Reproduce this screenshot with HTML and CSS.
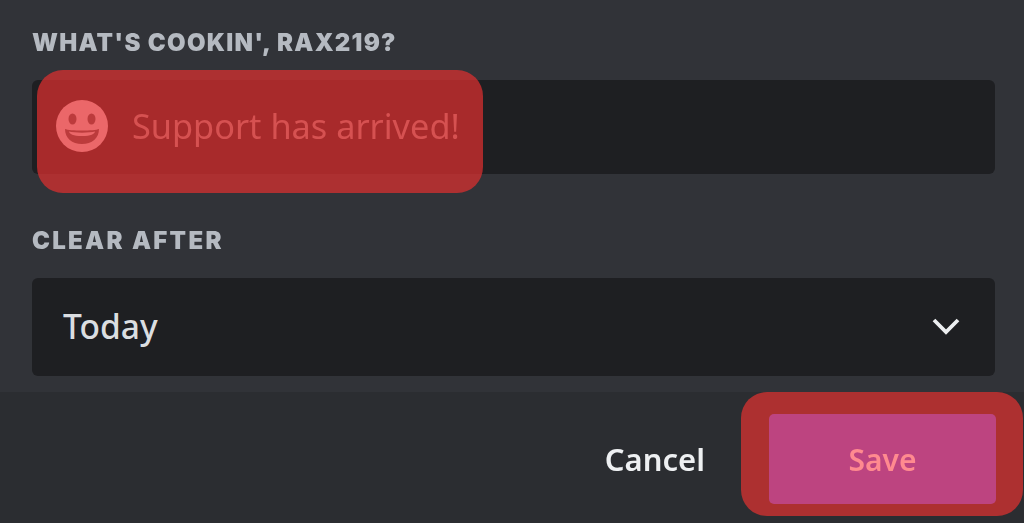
FILE: index.html
```html
<!DOCTYPE html>
<html lang="en">
<head>
<meta charset="utf-8">
<title>Set a custom status</title>
<link rel="stylesheet" href="styles.css">
</head>
<body>
<main class="modal">
  <section class="content">
    <label class="label label-status">WHAT'S COOKIN', RAX219?</label>
    <div class="field field-status">
      <svg class="emoji" viewBox="0 0 52 52" aria-hidden="true">
        <circle cx="26" cy="26" r="26" fill="#ffe9f0"/>
        <ellipse cx="16.500" cy="19" rx="4" ry="5.500" fill="#000" fill-opacity=".62"/>
        <ellipse cx="35.500" cy="19" rx="4" ry="5.500" fill="#000" fill-opacity=".62"/>
        <path d="M9 29C14 31 38 31 43 29C43 38 36 44 26 44C16 44 9 38 9 29Z" fill="#000" fill-opacity=".62"/>
        <path d="M13 31.500C18 33 34 33 39 31.500C38.500 34 35 36 26 36C17 36 13.500 34 13 31.500Z" fill="#ffe9f0"/>
      </svg>
      <span class="status-text">Support has arrived!</span>
      <div class="highlight-status"></div>
    </div>
    <label class="label label-clear">CLEAR AFTER</label>
    <div class="field field-clear">
      <span class="clear-value">Today</span>
      <svg class="chevron" viewBox="0 0 30 20" aria-hidden="true">
        <path d="M3 4L15 16L27 4" fill="none" stroke="#eceef0" stroke-width="3.800"/>
      </svg>
    </div>
  </section>
  <footer class="footer">
    <button class="btn btn-cancel" type="button">Cancel</button>
    <div class="highlight-save">
      <button class="btn btn-save" type="button">Save</button>
    </div>
  </footer>
</main>
</body>
</html>
```
FILE: styles.css
```css
* { box-sizing: border-box; }
html, body { margin: 0; height: 100%; }
body { background: #313338; overflow: hidden; font-family: "Noto Sans", "Liberation Sans", sans-serif; }
.modal { width: 1024px; height: 523px; display: flex; flex-direction: column; filter: blur(.45px); }
.content { height: 392px; padding: 29px 29px 0 32px; display: flex; flex-direction: column; }
.label { display: block; height: 28px; line-height: 28px; font-family: Inter, "Liberation Sans", sans-serif; font-size: 24px; font-weight: 900; color: #b5bac1; white-space: nowrap; }
.label-status { margin-bottom: 23px; letter-spacing: 1.260px; }
.label-clear { margin-bottom: 23px; margin-top: 53px; letter-spacing: 2.300px; }
.field { position: relative; background: #1e1f22; border-radius: 6px; display: flex; align-items: center; }
.field-status { height: 94px; padding: 0 0 3px 24px; gap: 24px; }
.field-clear { height: 98px; padding: 0 34px 2px 31px; justify-content: space-between; }
.emoji { width: 52px; height: 52px; flex: none; }
.status-text { font-size: 34.300px; color: #b8a0a0; white-space: nowrap; }
.clear-value { font-size: 33.500px; font-weight: 500; color: #dbdee1; }
.chevron { width: 30px; height: 20px; }
.highlight-status { position: absolute; left: 5px; top: -10px; width: 446px; height: 123px; border-radius: 26px; background: rgba(227, 47, 47, .7); pointer-events: none; }
.footer { flex: 1; background: #2b2d31; padding: 0 1px 7px 0; display: flex; justify-content: flex-end; align-items: stretch; }
.btn { border: 0; font-family: inherit; font-weight: 600; }
.btn-cancel { background: none; color: #eef0f2; font-size: 31px; margin-right: 36px; padding: 9px 0 0; }
.highlight-save { width: 282px; padding: 22px 27px 12px 28px; border-radius: 26px; background: #ad3030; display: flex; }
.btn-save { flex: 1; background: #bd4480; color: #ff8a8f; border-radius: 5px; font-size: 30px; padding: 0; }
```
